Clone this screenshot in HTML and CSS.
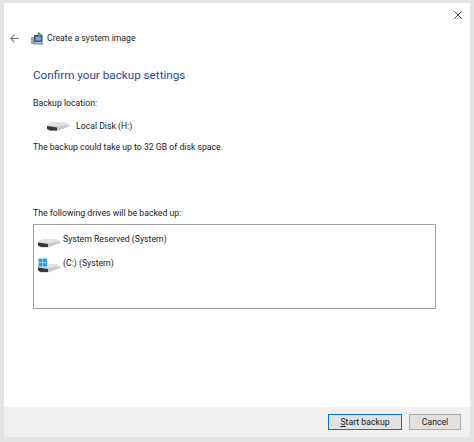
FILE: index.html
```html
<!DOCTYPE html>
<html>
<head>
    <title>Create a system image</title>
    <link rel="stylesheet" href="styles.css">
</head>
<body>
    <div class="window">
        <div class="title-bar">
            <svg class="close-icon" width="8" height="8" viewBox="0 0 8 8">
                <path d="M0.3 0.3L7.7 7.7M7.7 0.3L0.3 7.7" stroke="#444" stroke-width="1" fill="none"/>
            </svg>
        </div>
        <div class="nav-bar">
            <svg class="back-icon" width="9" height="9" viewBox="0 0 9 9">
                <path d="M4.4 0.7L0.8 4.5L4.4 8.3M0.8 4.5H9" stroke="#7c7c7c" stroke-width="1.2" fill="none"/>
            </svg>
            <svg class="app-icon" width="13" height="13" viewBox="0 0 13 13">
                <rect x="0" y="5" width="3.5" height="7" fill="#a8a68e"/>
                <rect x="3" y="3" width="8.5" height="7" fill="#2b4f9e"/>
                <rect x="4.5" y="4.5" width="5.5" height="4" fill="#7fa6dc"/>
                <path d="M8 0L11 2.5H9.5V5H7.5V2.5H5.5Z" fill="#4fa84a"/>
                <rect x="2" y="10.5" width="10" height="2" fill="#8f8f86"/>
            </svg>
            <span class="nav-title">Create a system image</span>
        </div>
        <div class="content">
            <h1 class="heading">Confirm your backup settings</h1>
            <p class="label">Backup location:</p>
            <div class="location">
                <svg width="22" height="9" viewBox="0 0 22 9">
                    <use href="#drive"/>
                </svg>
                <span>Local Disk (H:)</span>
            </div>
            <p class="label">The backup could take up to 32 GB of disk space.</p>
            <p class="label drives-label">The following drives will be backed up:</p>
            <div class="drive-list">
                <div class="drive">
                    <svg class="drive-icon" width="22" height="10" viewBox="0 0 22 9">
                        <use href="#drive"/>
                    </svg>
                    <span>System Reserved (System)</span>
                </div>
                <div class="drive">
                    <svg class="drive-icon-win" width="22" height="15" viewBox="0 -5 22 14">
                        <use href="#drive"/>
                        <rect x="0.5" y="-5" width="4" height="3.8" fill="#1ea3e6"/>
                        <rect x="5" y="-5" width="4" height="3.8" fill="#1ea3e6"/>
                        <rect x="0.5" y="-0.8" width="4" height="3.8" fill="#1ea3e6"/>
                        <rect x="5" y="-0.8" width="4" height="3.8" fill="#1ea3e6"/>
                    </svg>
                    <span>(C:) (System)</span>
                </div>
            </div>
        </div>
        <div class="footer">
            <button class="btn btn-default"><u>S</u>tart backup</button>
            <button class="btn">Cancel</button>
        </div>
    </div>

    <svg width="0" height="0" class="defs">
        <defs>
            <g id="drive">
                <path d="M0 3.5L5 0.5H18L22 3V4.5L10 9H3L0 7Z" fill="#c8c8c8"/>
                <path d="M5 0.5H18L22 3L10 4.5L0 3.5Z" fill="#e2e2e2"/>
                <path d="M0 4L10 5.5V8.5H3L0 7Z" fill="#383838"/>
            </g>
        </defs>
    </svg>
</body>
</html>
```

FILE: styles.css
```css
html, body {
    height: 100%;
    margin: 0;
}
body {
    background: #e4e4e4;
    font-family: Roboto, sans-serif;
    font-size: 8.7px;
    color: #1a1a1a;
    padding: 3px 4px 5px 4px;
    box-sizing: border-box;
}
.window {
    height: 100%;
    background: #fff;
    display: flex;
    flex-direction: column;
}
.title-bar {
    height: 27px;
    display: flex;
    justify-content: flex-end;
    align-items: flex-start;
}
.close-icon {
    margin: 8px 8px 0 0;
}
.defs {
    position: absolute;
}
.nav-bar {
    display: flex;
    align-items: center;
    height: 16px;
}
.back-icon {
    margin-left: 6px;
}
.app-icon {
    margin-left: 12px;
}
.nav-title {
    margin-left: 3px;
}
.content {
    flex: 1;
    padding: 21px 34px 0 29px;
}
.heading {
    margin: 0 0 14px 0;
    font-size: 11.7px;
    line-height: 16px;
    font-weight: 400;
    color: #1f4a9c;
}
.label {
    margin: 0;
    line-height: 12px;
}
.location {
    display: flex;
    align-items: center;
    gap: 7px;
    margin: 11px 0 9px 14px;
    line-height: 12px;
}
.drives-label {
    margin-top: 54px;
}
.drive-list {
    margin-top: 5px;
    height: 85px;
    box-sizing: border-box;
    border: 1px solid #a3a3a3;
    padding: 8px 0 0 4px;
}
.drive {
    display: flex;
    align-items: flex-start;
    height: 24px;
    line-height: 12px;
    gap: 3px;
}
.drive-icon {
    margin-top: 5px;
}
.drive-icon-win {
    margin-top: 1px;
}
.footer {
    height: 30px;
    background: #f0f0f0;
    display: flex;
    justify-content: flex-end;
    align-items: center;
    gap: 7px;
    padding-right: 9px;
}
.btn {
    width: 52px;
    height: 16px;
    padding: 0;
    background: #e1e1e1;
    border: 1px solid #adadad;
    font-family: inherit;
    font-size: 8.7px;
    color: #1a1a1a;
}
.btn-default {
    width: 74px;
    border: 1.5px solid #0078d7;
}
```
